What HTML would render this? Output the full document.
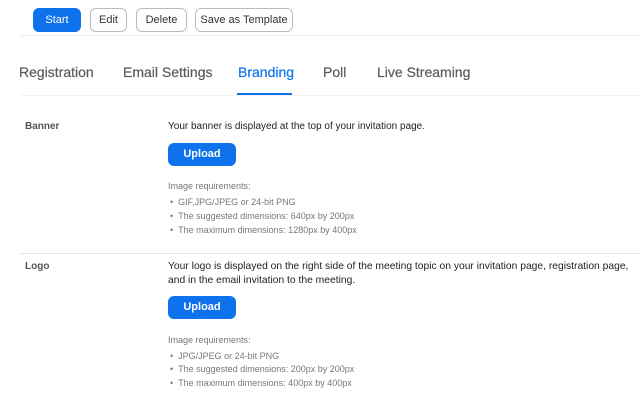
<!DOCTYPE html>
<html><head><style>
body{margin:0;width:640px;height:416px;background:#fff;font-family:"Liberation Sans",sans-serif;position:relative;overflow:hidden;color:#333}
.a{position:absolute;white-space:nowrap}
.btn{position:absolute;top:8px;height:24px;box-sizing:border-box;border:1px solid #bbb;border-radius:6px;font-size:11px;line-height:22px;text-align:center;color:#333;background:#fff}
.tab{position:absolute;top:64px;font-size:14px;color:#5a5a5a;-webkit-text-stroke:0.2px #5a5a5a}
.up{position:absolute;left:168px;width:68px;height:23px;background:#0e72ed;border-radius:6px;color:#fff;font-size:11px;font-weight:bold;text-align:center;line-height:23px}
.s{font-size:9px;color:#777}
.t{font-size:10px;color:#222}
</style></head><body>
<div class="btn" style="left:33px;width:48px;background:#0e72ed;border-color:#0e72ed;color:#fff">Start</div>
<div class="btn" style="left:90px;width:37px">Edit</div>
<div class="btn" style="left:136px;width:51px">Delete</div>
<div class="btn" style="left:195px;width:98px">Save as Template</div>
<div class="a" style="left:20px;top:35px;width:620px;height:1px;background:#eee"></div>
<div class="tab" style="left:19px">Registration</div>
<div class="tab" style="left:123px">Email Settings</div>
<div class="tab" style="left:238px;color:#0e72ed;-webkit-text-stroke:0.2px #0e72ed">Branding</div>
<div class="tab" style="left:323px">Poll</div>
<div class="tab" style="left:377px">Live Streaming</div>
<div class="a" style="left:20px;top:95px;width:620px;height:1px;background:#f3f3f3"></div>
<div class="a" style="left:237px;top:93px;width:55px;height:2px;background:#0e72ed"></div>

<div class="a t" style="left:25px;top:121px;font-weight:bold;color:#555">Banner</div>
<div class="a t" style="left:168px;top:121px">Your banner is displayed at the top of your invitation page.</div>
<div class="up" style="top:143px">Upload</div>
<div class="a s" style="left:168px;top:181px">Image requirements:</div>
<div class="a s" style="left:170px;top:197px">•&nbsp;&nbsp;GIF,JPG/JPEG or 24-bit PNG</div>
<div class="a s" style="left:170px;top:211px">•&nbsp;&nbsp;The suggested dimensions: 640px by 200px</div>
<div class="a s" style="left:170px;top:225px">•&nbsp;&nbsp;The maximum dimensions: 1280px by 400px</div>
<div class="a" style="left:20px;top:253px;width:620px;height:1px;background:#e6e6e6"></div>
<div class="a t" style="left:25px;top:261px;font-weight:bold;color:#555">Logo</div>
<div class="a t" style="left:168px;top:261px;font-size:10.3px">Your logo is displayed on the right side of the meeting topic on your invitation page, registration page,</div>
<div class="a t" style="left:168px;top:275px;font-size:10.3px">and in the email invitation to the meeting.</div>
<div class="up" style="top:296px">Upload</div>
<div class="a s" style="left:168px;top:335px">Image requirements:</div>
<div class="a s" style="left:170px;top:351px">•&nbsp;&nbsp;JPG/JPEG or 24-bit PNG</div>
<div class="a s" style="left:170px;top:364px">•&nbsp;&nbsp;The suggested dimensions: 200px by 200px</div>
<div class="a s" style="left:170px;top:378px">•&nbsp;&nbsp;The maximum dimensions: 400px by 400px</div>
</body></html>
